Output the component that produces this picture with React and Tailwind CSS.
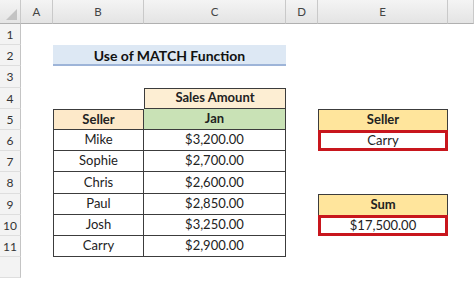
import React from "react";

const font = { fontFamily: "Lato, 'Open Sans', Arial, sans-serif" };

const B = "border-[#3c3c3c]";

function Cell({ className = "", children, span }) {
  return (
    <div
      className={`flex items-center justify-center whitespace-nowrap ${span ? "col-span-2" : ""} ${className}`}
    >
      {children}
    </div>
  );
}

const data = [
  ["Mike", "$3,200.00"],
  ["Sophie", "$2,700.00"],
  ["Chris", "$2,600.00"],
  ["Paul", "$2,850.00"],
  ["Josh", "$3,250.00"],
  ["Carry", "$2,900.00"],
];

function RowNum({ n }) {
  return (
    <div className="flex items-center justify-center pt-[2px] bg-[#f3f3f3] border-r border-b border-r-[#c4c4c4] border-b-[#dedede] text-[12px] text-[#333]">
      {n}
    </div>
  );
}

export default function App() {
  const rows = [];
  for (let r = 1; r <= 12; r++) {
    rows.push(<RowNum key={`n${r}`} n={r <= 11 ? r : ""} />);
    if (r === 2) {
      rows.push(<Cell key="2a" />);
      rows.push(
        <Cell key="2bc" span className="bg-[#dde8f4] border-b-2 border-b-[#9db4d8] text-[14px] font-bold text-[#111] pt-[1px]">
          Use of MATCH Function
        </Cell>
      );
      rows.push(<Cell key="2d" />, <Cell key="2e" />, <Cell key="2f" />);
      continue;
    }
    const cells = [null, null, null, null, null, null];
    if (r === 4) {
      cells[2] = (
        <Cell className={`bg-[#fdeed3] border ${B} font-bold`}>Sales Amount</Cell>
      );
    }
    if (r === 5) {
      cells[1] = <Cell className={`bg-[#fde9c9] border ${B} font-bold`}>Seller</Cell>;
      cells[2] = <Cell className={`bg-[#c9e2b6] border-r border-b ${B} font-bold`}>Jan</Cell>;
      cells[4] = <Cell className={`bg-[#ffe59c] border-t border-l border-r ${B} font-bold`}>Seller</Cell>;
    }
    if (r >= 6 && r <= 11) {
      const [name, amt] = data[r - 6];
      cells[1] = <Cell className={`border-l border-r border-b ${B}`}>{name}</Cell>;
      cells[2] = <Cell className={`border-r border-b ${B}`}>{amt}</Cell>;
    }
    if (r === 6) {
      cells[4] = <Cell className="border-[3px] border-[#c8161d]">Carry</Cell>;
    }
    if (r === 9) {
      cells[4] = <Cell className={`bg-[#ffe59c] border-t border-l border-r ${B} font-bold`}>Sum</Cell>;
    }
    if (r === 10) {
      cells[4] = <Cell className="border-[3px] border-[#c8161d]">$17,500.00</Cell>;
    }
    cells.forEach((c, i) => {
      rows.push(<React.Fragment key={`${r}-${i}`}>{c || <Cell />}</React.Fragment>);
    });
  }

  const letters = ["A", "B", "C", "D", "E", ""];

  return (
    <div
      style={font}
      className="w-[474px] h-[282px] overflow-hidden bg-white grid grid-cols-[21px_32px_91px_142px_32px_130px_1fr] grid-rows-[24px_repeat(12,21.2px)] text-[13px] text-[#222]"
    >
      <div className="relative bg-gradient-to-b from-[#f4f4f4] to-[#e4e4e4] border-r border-b border-r-[#c9c9c9] border-b-[#b0b0b0]">
        <svg className="absolute right-[3px] bottom-[3px]" width="11" height="11" viewBox="0 0 11 11">
          <polygon points="11,0 11,11 0,11" fill="#c3c3c3" />
        </svg>
      </div>
      {letters.map((l, i) => (
        <div
          key={i}
          className="flex items-center justify-center bg-gradient-to-b from-[#f4f4f4] to-[#e4e4e4] border-r border-b border-r-[#c9c9c9] border-b-[#b0b0b0] text-[11.5px] text-[#444]"
        >
          {l}
        </div>
      ))}
      {rows}
    </div>
  );
}
